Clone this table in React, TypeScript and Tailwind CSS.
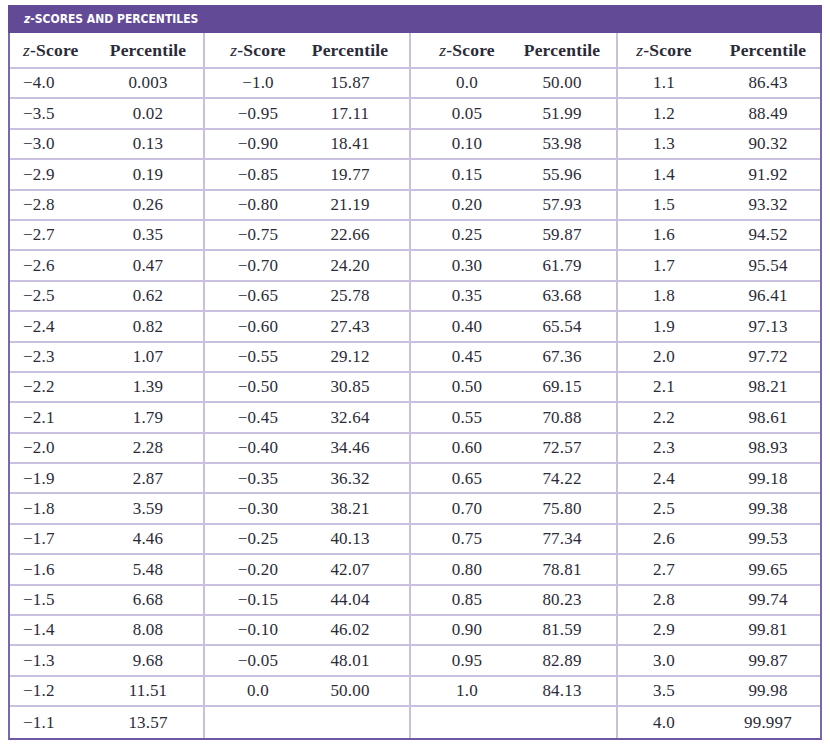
const g1 = [
  ["−4.0", "0.003"], ["−3.5", "0.02"], ["−3.0", "0.13"], ["−2.9", "0.19"],
  ["−2.8", "0.26"], ["−2.7", "0.35"], ["−2.6", "0.47"], ["−2.5", "0.62"],
  ["−2.4", "0.82"], ["−2.3", "1.07"], ["−2.2", "1.39"], ["−2.1", "1.79"],
  ["−2.0", "2.28"], ["−1.9", "2.87"], ["−1.8", "3.59"], ["−1.7", "4.46"],
  ["−1.6", "5.48"], ["−1.5", "6.68"], ["−1.4", "8.08"], ["−1.3", "9.68"],
  ["−1.2", "11.51"], ["−1.1", "13.57"],
];

const g2 = [
  ["−1.0", "15.87"], ["−0.95", "17.11"], ["−0.90", "18.41"], ["−0.85", "19.77"],
  ["−0.80", "21.19"], ["−0.75", "22.66"], ["−0.70", "24.20"], ["−0.65", "25.78"],
  ["−0.60", "27.43"], ["−0.55", "29.12"], ["−0.50", "30.85"], ["−0.45", "32.64"],
  ["−0.40", "34.46"], ["−0.35", "36.32"], ["−0.30", "38.21"], ["−0.25", "40.13"],
  ["−0.20", "42.07"], ["−0.15", "44.04"], ["−0.10", "46.02"], ["−0.05", "48.01"],
  ["0.0", "50.00"], ["", ""],
];

const g3 = [
  ["0.0", "50.00"], ["0.05", "51.99"], ["0.10", "53.98"], ["0.15", "55.96"],
  ["0.20", "57.93"], ["0.25", "59.87"], ["0.30", "61.79"], ["0.35", "63.68"],
  ["0.40", "65.54"], ["0.45", "67.36"], ["0.50", "69.15"], ["0.55", "70.88"],
  ["0.60", "72.57"], ["0.65", "74.22"], ["0.70", "75.80"], ["0.75", "77.34"],
  ["0.80", "78.81"], ["0.85", "80.23"], ["0.90", "81.59"], ["0.95", "82.89"],
  ["1.0", "84.13"], ["", ""],
];

const g4 = [
  ["1.1", "86.43"], ["1.2", "88.49"], ["1.3", "90.32"], ["1.4", "91.92"],
  ["1.5", "93.32"], ["1.6", "94.52"], ["1.7", "95.54"], ["1.8", "96.41"],
  ["1.9", "97.13"], ["2.0", "97.72"], ["2.1", "98.21"], ["2.2", "98.61"],
  ["2.3", "98.93"], ["2.4", "99.18"], ["2.5", "99.38"], ["2.6", "99.53"],
  ["2.7", "99.65"], ["2.8", "99.74"], ["2.9", "99.81"], ["3.0", "99.87"],
  ["3.5", "99.98"], ["4.0", "99.997"],
];

function Row({ cells, header, last }: { cells: string[][]; header?: boolean; last?: boolean }) {
  const rowCls = header
    ? "h-[36px] border-b-2 border-[#c9c0df] font-bold text-[17.5px]"
    : last
      ? "h-[30.4px]"
      : "h-[30.4px] border-b-2 border-[#c9c0df]";
  const z = (v: string) =>
    header ? (
      <span>
        <i className="font-normal">z</i>-Score
      </span>
    ) : (
      v
    );
  return (
    <div className={`flex ${rowCls}`}>
      <div className="w-[193px] grid grid-cols-[83px_1fr] items-center">
        <div className="pl-[13px]">{z(cells[0][0])}</div>
        <div className="text-center">{header ? "Percentile" : cells[0][1]}</div>
      </div>
      <div className="w-[206px] border-l-2 border-[#c9c0df] grid grid-cols-[106px_78px_1fr] items-center">
        <div className="text-center">{z(cells[1][0])}</div>
        <div className="text-center">{header ? "Percentile" : cells[1][1]}</div>
      </div>
      <div className="w-[207px] border-l-2 border-[#c9c0df] grid grid-cols-[112px_78px_1fr] items-center">
        <div className="text-center">{z(cells[2][0])}</div>
        <div className="text-center">{header ? "Percentile" : cells[2][1]}</div>
      </div>
      <div className="w-[204px] border-l-2 border-[#c9c0df] grid grid-cols-[92px_1fr] items-center">
        <div className="text-center">{z(cells[3][0])}</div>
        <div className="text-center pl-[6px]">{header ? "Percentile" : cells[3][1]}</div>
      </div>
    </div>
  );
}

export default function App() {
  return (
    <div className="w-[830px] h-[748px] bg-white pt-[5px] pl-[8px]">
      <div className="w-[814px] border-x-2 border-b-2 border-[#6e58a4] border-x-[#7a67ad] text-[#2b2b38] text-[17px] tracking-[0.2px] font-['Liberation_Serif',serif]">
        <div className="h-[28px] -mx-[2px] bg-[#634a97] flex items-center pl-[16px]">
          <span className="text-white text-[12px] font-bold tracking-normal font-['DejaVu_Sans_Condensed','Liberation_Sans_Narrow','Liberation_Sans',sans-serif]">
            <i>z</i>-SCORES AND PERCENTILES
          </span>
        </div>
        <Row cells={[["", ""], ["", ""], ["", ""], ["", ""]]} header />
        {g1.map((_, i) => (
          <Row
            key={i}
            cells={[g1[i], g2[i], g3[i], g4[i]]}
            last={i === g1.length - 1}
          />
        ))}
      </div>
    </div>
  );
}
